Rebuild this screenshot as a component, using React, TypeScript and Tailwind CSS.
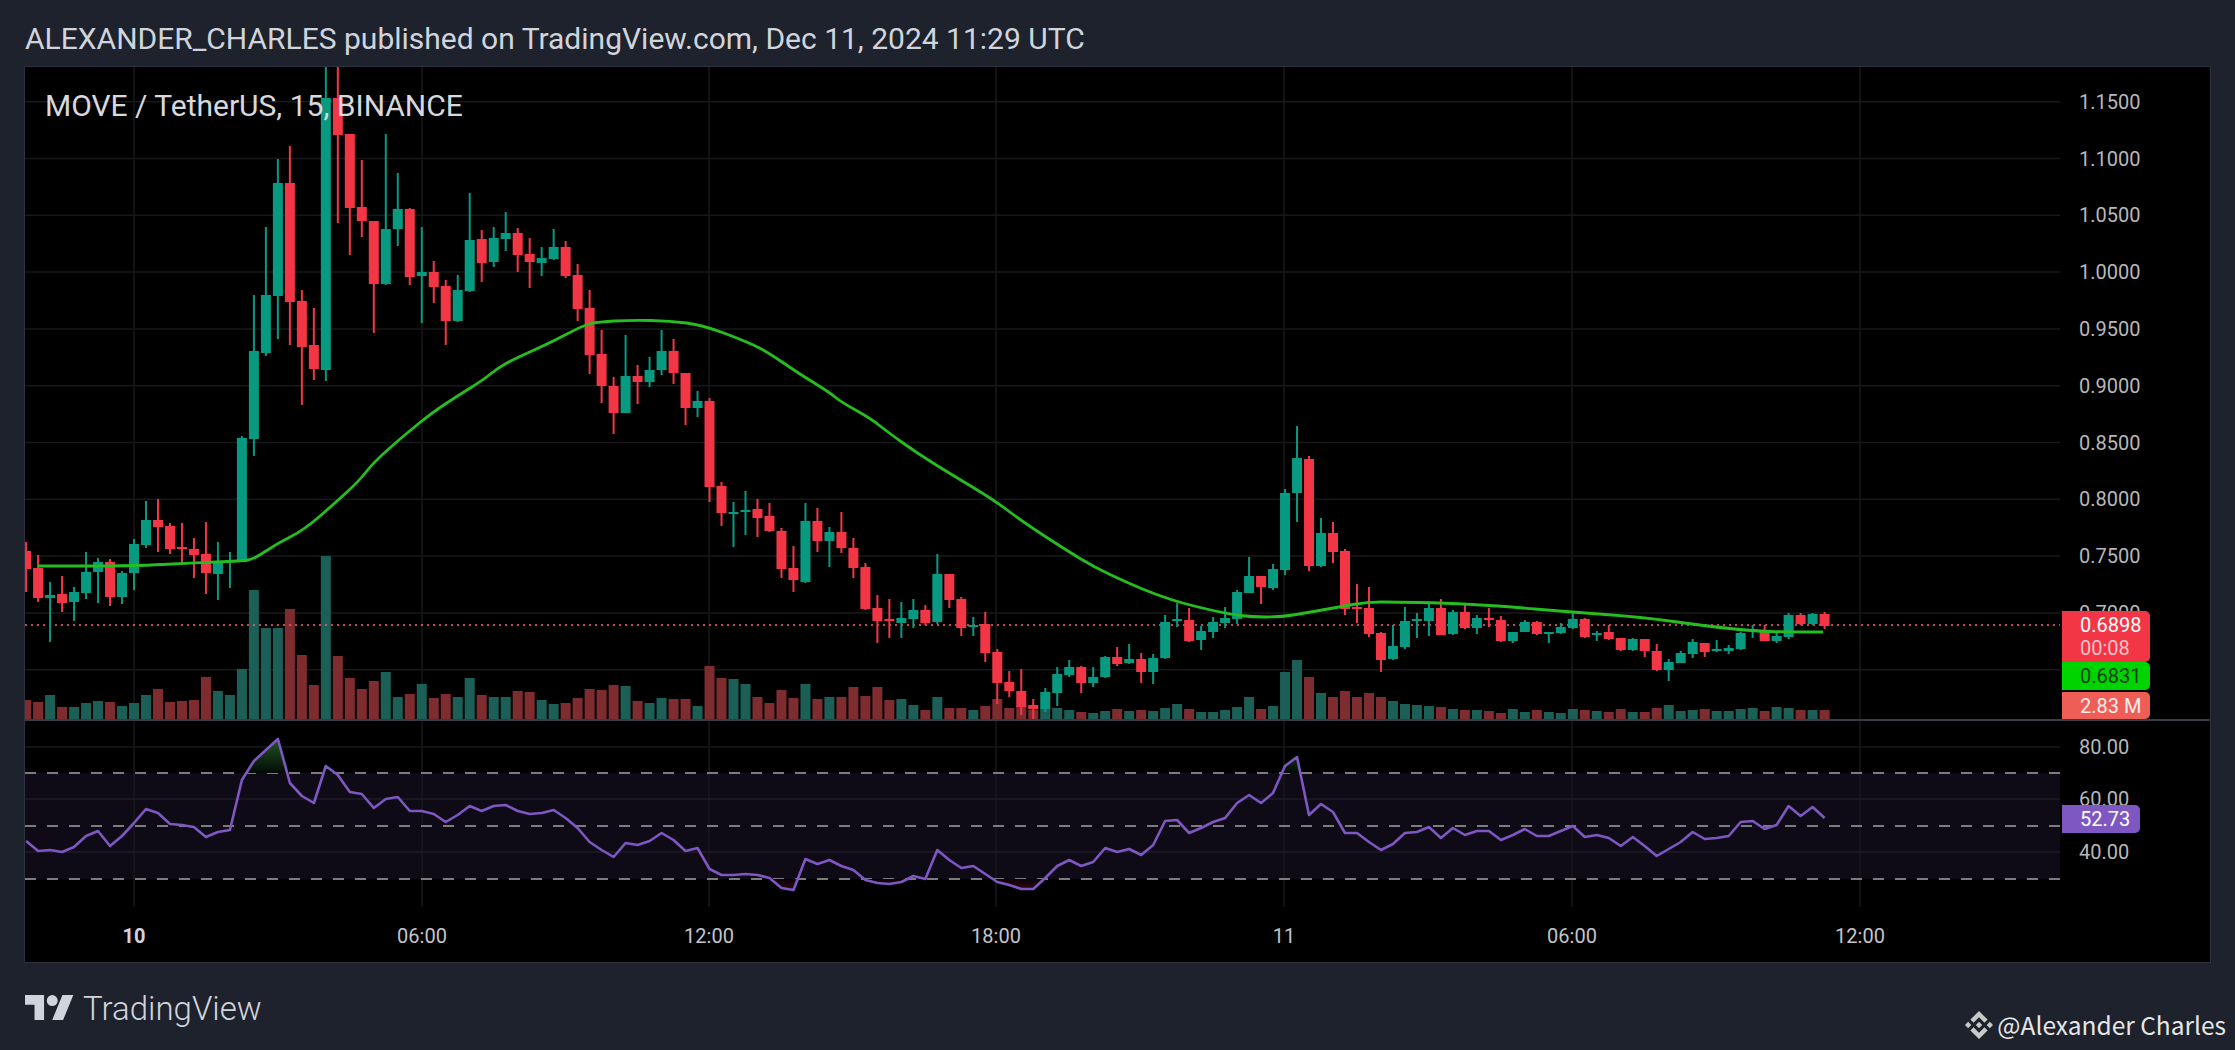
import React from 'react';

// one bar per 15 minutes, values are page pixels: [bodyTop, bodyBottom, wickTop, wickBottom, up]
type Candle = [number, number, number, number, number];

const candles: Candle[] = [
  [551, 569, 542, 592, 0], [568, 598, 555, 602, 0], [595, 598, 582, 642, 1], [594, 603, 576, 612, 0], [592, 602, 587, 621, 1],
  [572, 593, 552, 599, 1], [562, 572, 558, 603, 1], [562, 597, 559, 606, 0], [573, 597, 571, 604, 1], [544, 573, 539, 590, 1],
  [520, 545, 501, 548, 1], [520, 527, 499, 552, 0], [526, 549, 523, 554, 0], [547, 549, 523, 563, 0], [549, 555, 538, 578, 0],
  [554, 573, 522, 594, 0], [562, 574, 542, 600, 1], [560, 562, 552, 588, 1], [438, 562, 436, 562, 1], [351, 439, 295, 456, 1],
  [295, 353, 227, 356, 1], [183, 296, 159, 339, 1], [183, 302, 146, 345, 0], [301, 347, 290, 405, 0], [345, 369, 308, 380, 0],
  [98, 370, 60, 381, 1], [98, 135, 60, 223, 0], [134, 208, 134, 255, 0], [207, 221, 160, 237, 0], [221, 284, 221, 333, 0],
  [229, 284, 134, 285, 1], [209, 229, 173, 246, 1], [209, 277, 208, 285, 0], [272, 276, 227, 323, 1], [272, 287, 261, 303, 0],
  [286, 321, 280, 345, 0], [290, 321, 275, 322, 1], [240, 291, 193, 292, 1], [239, 263, 230, 282, 0], [238, 262, 227, 267, 1],
  [233, 239, 212, 251, 1], [233, 255, 228, 272, 0], [254, 262, 238, 288, 0], [258, 263, 247, 276, 1], [247, 259, 229, 260, 1],
  [247, 276, 241, 278, 0], [275, 309, 264, 321, 0], [308, 355, 290, 374, 0], [354, 386, 330, 403, 0], [386, 413, 377, 434, 0],
  [376, 413, 335, 413, 1], [376, 382, 365, 404, 0], [370, 382, 357, 387, 1], [351, 370, 330, 375, 1], [351, 373, 339, 384, 0],
  [373, 408, 373, 425, 0], [401, 408, 391, 417, 1], [401, 487, 398, 502, 0], [486, 513, 482, 526, 0], [512, 513, 502, 547, 1],
  [510, 511, 491, 535, 1], [509, 518, 499, 537, 0], [516, 531, 503, 532, 0], [531, 569, 528, 578, 0], [568, 580, 546, 592, 0],
  [521, 582, 503, 583, 1], [521, 541, 508, 552, 0], [532, 541, 527, 567, 1], [532, 548, 512, 553, 0], [548, 568, 538, 578, 0],
  [567, 609, 563, 610, 0], [608, 621, 595, 643, 0], [619, 621, 599, 638, 0], [618, 623, 602, 638, 1], [610, 619, 599, 628, 1],
  [610, 623, 605, 625, 0], [574, 622, 554, 624, 1], [574, 600, 574, 608, 0], [599, 628, 597, 636, 0], [625, 627, 617, 636, 1],
  [624, 653, 612, 662, 0], [652, 683, 649, 704, 0], [682, 691, 671, 697, 0], [691, 707, 669, 715, 0], [705, 709, 699, 719, 0],
  [692, 709, 688, 712, 1], [674, 693, 667, 706, 1], [667, 675, 660, 677, 1], [667, 683, 666, 693, 0], [677, 683, 667, 687, 1],
  [657, 677, 656, 678, 1], [657, 664, 647, 666, 0], [659, 663, 644, 664, 1], [659, 672, 653, 683, 0], [658, 672, 654, 684, 1],
  [622, 658, 615, 659, 1], [619, 621, 603, 627, 1], [620, 641, 608, 642, 0], [631, 640, 626, 650, 1], [622, 632, 617, 638, 1],
  [618, 623, 607, 628, 1], [592, 619, 590, 624, 1], [576, 593, 557, 593, 1], [576, 587, 576, 604, 0], [569, 588, 564, 590, 1],
  [493, 570, 489, 575, 1], [458, 493, 426, 522, 1], [459, 566, 456, 571, 0], [533, 566, 518, 567, 1], [533, 552, 522, 563, 0],
  [551, 609, 549, 615, 0], [607, 609, 584, 623, 0], [608, 634, 587, 637, 0], [633, 660, 632, 672, 0], [646, 659, 625, 660, 1],
  [621, 647, 607, 649, 1], [619, 621, 613, 638, 1], [608, 621, 603, 636, 1], [608, 635, 599, 635, 0], [612, 634, 610, 635, 1],
  [612, 628, 605, 629, 0], [618, 628, 615, 634, 1], [618, 620, 608, 627, 0], [620, 641, 616, 642, 0], [632, 641, 632, 643, 1],
  [622, 632, 620, 632, 1], [622, 634, 621, 635, 0], [632, 633, 632, 643, 1], [627, 633, 623, 634, 1], [619, 628, 613, 629, 1],
  [619, 637, 618, 638, 0], [633, 634, 631, 641, 1], [632, 639, 625, 640, 0], [638, 650, 638, 651, 0], [639, 650, 638, 651, 1],
  [639, 651, 639, 657, 0], [651, 670, 644, 671, 0], [662, 670, 659, 681, 1], [653, 663, 651, 663, 1], [642, 654, 639, 658, 1],
  [643, 652, 643, 657, 0], [649, 651, 640, 652, 1], [648, 651, 645, 654, 1], [633, 649, 632, 650, 1], [629, 631, 625, 638, 1],
  [631, 641, 625, 641, 0], [636, 641, 633, 643, 1], [615, 637, 613, 639, 1], [615, 624, 613, 625, 0], [614, 624, 613, 625, 1],
  [614, 626, 612, 629, 0],
];

// top of each volume bar, same order as candles
const volumes = [
  700, 702, 695, 707, 707, 703, 701, 702, 706, 703, 695, 689, 702, 701, 700, 677, 691, 695, 669, 590,
  628, 628, 609, 655, 685, 556, 656, 678, 689, 681, 672, 697, 694, 684, 698, 694, 697, 678, 695, 697,
  697, 691, 692, 700, 704, 703, 698, 689, 690, 685, 686, 701, 703, 698, 699, 699, 706, 666, 678, 679,
  684, 697, 703, 690, 698, 684, 699, 697, 697, 687, 696, 687, 700, 699, 705, 710, 697, 708, 708, 710,
  706, 699, 708, 706, 710, 708, 708, 710, 712, 713, 711, 709, 711, 710, 711, 708, 704, 709, 712, 712,
  710, 707, 697, 709, 706, 672, 660, 677, 693, 697, 691, 697, 693, 697, 701, 704, 705, 706, 707, 709,
  710, 710, 711, 713, 709, 712, 710, 712, 713, 709, 710, 711, 712, 709, 712, 712, 708, 705, 711, 710,
  709, 711, 711, 709, 708, 711, 707, 708, 710, 710, 710,
];

const rsi = [
  841, 851, 850, 852, 847, 836, 831, 846, 836, 823, 809, 813, 824, 825, 827, 837, 832, 830, 780, 761,
  750, 739, 783, 796, 803, 766, 775, 792, 794, 808, 799, 797, 811, 811, 814, 822, 815, 806, 811, 806,
  805, 811, 814, 813, 810, 818, 828, 842, 850, 857, 843, 845, 841, 833, 840, 851, 848, 869, 875, 875,
  874, 875, 878, 888, 890, 859, 864, 860, 866, 870, 880, 883, 884, 882, 876, 879, 850, 860, 868, 866,
  874, 882, 885, 889, 889, 878, 866, 860, 866, 862, 848, 852, 849, 855, 845, 821, 820, 833, 828, 822,
  818, 803, 795, 803, 793, 766, 757, 815, 804, 812, 833, 833, 842, 850, 844, 833, 832, 827, 838, 828,
  835, 831, 831, 840, 835, 829, 836, 836, 831, 826, 837, 835, 838, 846, 837, 846, 856, 849, 842, 832,
  839, 838, 836, 822, 821, 829, 825, 806, 816, 807, 818,
];

const sma: [number, number][] = [
  [38, 566], [134, 566], [191, 563], [242, 561], [254, 559], [278, 543], [304, 530], [335, 503], [359, 481], [373, 463],
  [402, 437], [433, 412], [459, 395], [483, 380], [498, 368], [514, 359], [550, 343], [584, 325], [598, 322], [632, 320],
  [670, 321], [703, 325], [750, 343], [769, 353], [798, 373], [829, 392], [841, 402], [870, 418], [889, 433], [917, 453],
  [949, 473], [994, 500], [1023, 522], [1066, 550], [1094, 567], [1128, 583], [1157, 595], [1185, 604], [1228, 614], [1252, 617],
  [1281, 617], [1305, 613], [1339, 607], [1367, 602], [1396, 602], [1444, 603], [1500, 606], [1570, 612], [1641, 617], [1706, 626],
  [1753, 631], [1786, 632], [1823, 632],
];

// rounds the moving average off between the points read from the chart
const smaPath = sma
  .map(([x, y], i) => {
    if (i === 0) return `M${x} ${y}`;
    const [px, py] = sma[i - 1];
    return `Q${px} ${py} ${(px + x) / 2} ${(py + y) / 2}`;
  })
  .join(' ') + ` L1823 632`;

const barX = (i: number) => 134 + (i - 9) * 11.99;

const timeMarks = [
  { x: 134, label: '10', bold: true },
  { x: 422, label: '06:00' },
  { x: 709, label: '12:00' },
  { x: 996, label: '18:00' },
  { x: 1284, label: '11' },
  { x: 1572, label: '06:00' },
  { x: 1860, label: '12:00' },
];

const priceMarks = ['1.1500', '1.1000', '1.0500', '1.0000', '0.9500', '0.9000', '0.8500', '0.8000', '0.7500', '0.7000'];
const priceY = (i: number) => 101.7 + i * 56.8;
const rsiMarks = [
  { y: 747, label: '80.00' },
  { y: 799, label: '60.00' },
  { y: 852, label: '40.00' },
];

const GRID = '#17181b';
const UP = '#089981';
const DOWN = '#f23645';

const VerticalGrid: React.FC<{ y1: number; y2: number }> = ({ y1, y2 }) => (
  <>
    {timeMarks.map((t) => (
      <line key={t.x} x1={t.x} x2={t.x} y1={y1} y2={y2} stroke={GRID} strokeWidth={1.5} />
    ))}
  </>
);

const PricePane: React.FC = () => (
  <svg className="block shrink-0" width={2035} height={652} viewBox="25 67 2035 652">
    <VerticalGrid y1={67} y2={719} />
    {[...priceMarks, '0.6500'].map((p, i) => (
      <line key={p} x1={25} x2={2060} y1={priceY(i)} y2={priceY(i)} stroke={GRID} strokeWidth={1.5} />
    ))}
    {volumes.map((top, i) => (
      <rect key={i} x={barX(i) - 5} y={top} width={10} height={719 - top} fill={candles[i][4] ? '#1c5f56' : '#7f2c30'} />
    ))}
    <line x1={25} x2={2060} y1={625} y2={625} stroke="#f8636f" strokeWidth={1.5} strokeDasharray="2 4" />
    {candles.map(([top, bottom, high, low, up], i) => (
      <g key={i} fill={up ? UP : DOWN}>
        <rect x={barX(i) - 1} y={high} width={2} height={low - high} />
        <rect x={barX(i) - 5} y={top} width={10} height={Math.max(bottom - top, 2)} />
      </g>
    ))}
    <path d={smaPath} fill="none" stroke="#26bd1e" strokeWidth={2.8} strokeLinejoin="round" />
  </svg>
);

const RsiPane: React.FC = () => {
  const line = rsi.map((y, i) => `${barX(i).toFixed(1)},${y}`).join(' ');
  const first = barX(0).toFixed(1);
  const last = barX(rsi.length - 1).toFixed(1);
  return (
    <svg className="block shrink-0" width={2035} height={186} viewBox="25 721 2035 186">
      <defs>
        <linearGradient id="overbought" gradientUnits="userSpaceOnUse" x1="0" x2="0" y1="745" y2="773">
          <stop offset="0" stopColor="#1b4a20" />
          <stop offset="1" stopColor="#040a05" />
        </linearGradient>
        <linearGradient id="oversold" gradientUnits="userSpaceOnUse" x1="0" x2="0" y1="879" y2="890">
          <stop offset="0" stopColor="#0a0206" />
          <stop offset="1" stopColor="#2a0a10" />
        </linearGradient>
        <clipPath id="aboveBand">
          <rect x="25" y="721" width="2035" height="52" />
        </clipPath>
        <clipPath id="belowBand">
          <rect x="25" y="879" width="2035" height="28" />
        </clipPath>
      </defs>
      <rect x={25} y={773} width={2035} height={106} fill="#0e0a16" />
      <VerticalGrid y1={721} y2={907} />
      {rsiMarks.map((m) => (
        <line key={m.y} x1={25} x2={2060} y1={m.y} y2={m.y} stroke={m.y === 747 ? GRID : '#1f1c27'} strokeWidth={1.5} />
      ))}
      {[773, 826, 879].map((y) => (
        <line key={y} x1={25} x2={2060} y1={y} y2={y} stroke="#7c7b81" strokeWidth={2} strokeDasharray="11 11" />
      ))}
      <polygon points={`${line} ${last},773 ${first},773`} fill="url(#overbought)" clipPath="url(#aboveBand)" />
      <polygon points={`${line} ${last},879 ${first},879`} fill="url(#oversold)" clipPath="url(#belowBand)" />
      <polyline points={line} fill="none" stroke="#7e57c2" strokeWidth={2.6} strokeLinejoin="round" />
    </svg>
  );
};

const AxisLabel: React.FC<{ y: number; top: number; children: React.ReactNode }> = ({ y, top, children }) => (
  <span
    className="absolute left-[19px] -translate-y-1/2 text-[20px] leading-none text-[#b7b8bc]"
    style={{ top: y - top }}
  >
    {children}
  </span>
);

const TradingViewLogo: React.FC = () => (
  <svg width={49} height={25} viewBox="0 4 36 18" preserveAspectRatio="none" fill="#d1d4dc">
    <path d="M14 22H7V11H0V4h14v18zM28 22h-8l7.5-18h8L28 22z" />
    <circle cx="20" cy="8" r="4" />
  </svg>
);

const BinanceLogo: React.FC = () => (
  <svg width={28} height={28} viewBox="0 0 126.61 126.61" fill="#c9c9c9">
    <path d="M38.73 53.2l24.59-24.58 24.6 24.6 14.3-14.31L63.32 0 24.42 38.9zM0 63.31L14.3 49l14.31 14.31-14.31 14.3zM38.73 73.41l24.59 24.59 24.6-24.6 14.31 14.29L63.32 126.61 24.42 87.7l-.02-.02zM98 63.31L112.3 49l14.31 14.31-14.31 14.3zM77.83 63.3L63.32 48.78 52.59 59.51l-1.24 1.23-2.54 2.54 14.51 14.52 14.51-14.5z" />
  </svg>
);

const App: React.FC = () => {
  return (
    <div className="flex h-[1050px] w-[2235px] flex-col overflow-hidden bg-[#1e222d] font-['Roboto',sans-serif]">
      <div className="flex h-[66px] items-center pl-[25px] pt-[11px] text-[30px] text-[#d1d4dc]">
        ALEXANDER_CHARLES published on TradingView.com, Dec 11, 2024 11:29 UTC
      </div>

      <div className="ml-[24px] w-[2187px] border border-[#2e3240] bg-black">
        <div className="relative flex h-[652px]">
          <PricePane />
          <div className="absolute left-[20px] top-[18px] text-[30px] leading-[41px] text-[#d8d9dd]">
            MOVE / TetherUS, 15, BINANCE
          </div>
          <div className="relative flex-1">
            {priceMarks.map((p, i) => (
              <AxisLabel key={p} y={priceY(i)} top={67}>
                {p}
              </AxisLabel>
            ))}
            <div className="absolute left-[2px] top-[544px] flex w-[88px] flex-col">
              <div className="flex h-[51px] flex-col rounded-r-[5px] bg-[#f23645] pl-[18px] pt-[3px] text-[20px] leading-[23px]">
                <span className="text-white">0.6898</span>
                <span className="text-[#fbc3c8]">00:08</span>
              </div>
              <div className="flex h-[28px] items-center rounded-r-[5px] bg-[#00d400] pl-[18px] text-[20px] text-[#0a3d0a]">
                0.6831
              </div>
              <div className="mt-[2px] flex h-[27px] items-center rounded-r-[5px] bg-[#ef5d57] pl-[18px] text-[20px] text-[#fdeeee]">
                2.83 M
              </div>
            </div>
          </div>
        </div>

        <div className="h-[2px] bg-[#3a3c45]" />

        <div className="flex h-[186px]">
          <RsiPane />
          <div className="relative flex-1">
            {rsiMarks.map((m) => (
              <AxisLabel key={m.y} y={m.y} top={721}>
                {m.label}
              </AxisLabel>
            ))}
            <div className="absolute left-[2px] top-[84px] flex h-[28px] w-[78px] items-center rounded-r-[5px] bg-[#7e57c2] pl-[18px] text-[20px] text-white">
              52.73
            </div>
          </div>
        </div>

        <div className="relative h-[55px]">
          {timeMarks.map((t) => (
            <span
              key={t.x}
              className={
                t.bold
                  ? 'absolute top-[18px] -translate-x-1/2 text-[20px] leading-[23px] font-bold text-[#d1d4dc]'
                  : 'absolute top-[18px] -translate-x-1/2 text-[20px] leading-[23px] text-[#c4c5c9]'
              }
              style={{ left: t.x - 25 }}
            >
              {t.label}
            </span>
          ))}
        </div>
      </div>

      <div className="relative flex flex-1 justify-between pl-[25px] pr-[9px]">
        <div className="flex h-fit items-center gap-[9px] pt-[29px]">
          <TradingViewLogo />
          <span className="pt-[3px] text-[33px] leading-[27px] font-light text-[#d1d4dc]">TradingView</span>
        </div>
        <div className="flex h-fit items-center gap-[4px] self-end pb-[10px]">
          <BinanceLogo />
          <span className="font-['Noto_Sans_CJK_SC',sans-serif] text-[24.5px] leading-[30px] text-[#e6e6e6]">@Alexander Charles</span>
        </div>
      </div>
    </div>
  );
};

export default App;
